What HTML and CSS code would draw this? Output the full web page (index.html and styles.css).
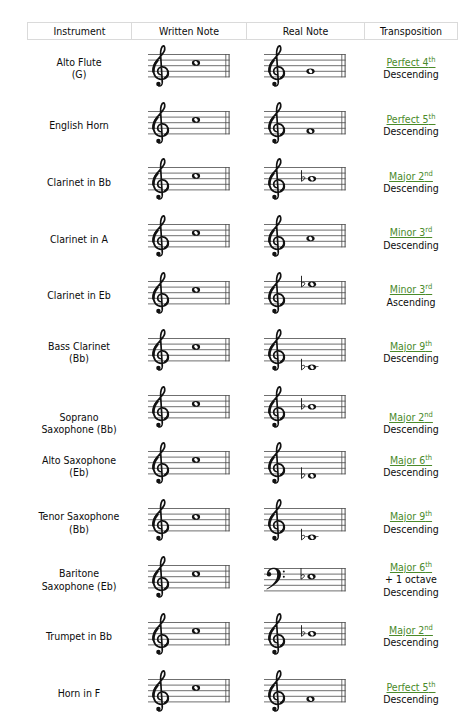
FILE: index.html
```html
<!DOCTYPE html>
<html>
<head>
<meta charset="utf-8">
<link rel="stylesheet" href="styles.css">
</head>
<body>
<svg class="sprite" width="0" height="0" aria-hidden="true">
  <defs>
    <g id="lines" fill="none" stroke="#4a4a4a" stroke-width="0.8">
      <path d="M0 9.5H81.6M0 15.1H81.6M0 20.7H81.6M0 26.3H81.6M0 31.9H81.6M77.8 9.1V32.3"/>
      <path stroke-width="1" d="M81.1 9.1V32.3"/>
    </g>
    <g id="tc">
      <g fill="none" stroke="#111" stroke-linecap="round" stroke-linejoin="round">
        <path stroke-width="1.7" d="M14.3 37L12.6 9.5C12.4 5.5 13.6 1.2 15.3 0.9C16.8 0.7 17.2 3.8 16.2 6.2C14.6 10 8.5 14.5 6.3 19.5C4.2 24.5 5.3 31 10 33.5C14 35.5 19.5 33.5 20.1 29C20.6 25 17.8 21.8 14.5 21.8C11.3 21.8 9.5 24 9.7 26.6C9.9 28.8 11.8 30 13.7 29.7"/>
        <path stroke-width="2.6" d="M9.5 15.5C7 18.5 5.2 22 5.4 26.5"/>
        <path stroke-width="2.2" d="M19.9 26.5C20.4 29 19.6 31.5 17 33"/>
        <path stroke-width="1.4" d="M14.3 37C14.6 40 12.8 41.3 10.8 41"/>
      </g>
      <circle cx="10.4" cy="39" r="2.2" fill="#111"/>
    </g>
    <g id="bc" fill="#111">
      <path d="M3 14.5C3.5 10 7.5 8.6 10.5 8.8C15 9.1 17 12.2 17 15.5C17 21.5 11 26.5 2.8 30.6L2.4 30C8.8 26 13.2 21.5 13.2 15.5C13.2 12 12 9.9 9.9 9.9C7.6 9.9 5.6 11 5.1 13Z"/>
      <circle cx="5" cy="15.2" r="2.2"/>
      <circle cx="19.8" cy="12.4" r="1"/>
      <circle cx="19.8" cy="17.8" r="1"/>
    </g>
    <g id="wn">
      <ellipse rx="4.1" ry="2.8" fill="#111"/>
      <ellipse rx="1.5" ry="2.1" transform="rotate(-40)" fill="#fff"/>
    </g>
    <g id="fl">
      <path d="M0 -8.5V2.6C1.6 1.6 3.6 0.4 3.3 -1.1C3 -2.4 1.2 -2.2 0 -0.9" fill="none" stroke="#111" stroke-width="0.9"/>
    </g>
    <g id="ledger">
      <path d="M-6.5 0H6.5" stroke="#4a4a4a" stroke-width="0.8"/>
    </g>
  </defs>
</svg>

<div class="chart">
  <div class="head">
    <div>Instrument</div>
    <div>Written Note</div>
    <div>Real Note</div>
    <div>Transposition</div>
  </div>

  <div class="row">
    <div class="name">Alto Flute<br>(G)</div>
    <div class="staff"><svg width="82" height="42" viewBox="0 0 82 42"><use href="#lines"/><use href="#tc"/><use href="#wn" x="48" y="17.9"/></svg></div>
    <div class="staff"><svg width="82" height="42" viewBox="0 0 82 42"><use href="#lines"/><use href="#tc"/><use href="#wn" x="46.5" y="26.3"/></svg></div>
    <div class="tr"><a>Perfect 4<sup>th</sup></a><br>Descending</div>
  </div>

  <div class="row">
    <div class="name">English Horn</div>
    <div class="staff"><svg width="82" height="42" viewBox="0 0 82 42"><use href="#lines"/><use href="#tc"/><use href="#wn" x="48" y="17.9"/></svg></div>
    <div class="staff"><svg width="82" height="42" viewBox="0 0 82 42"><use href="#lines"/><use href="#tc"/><use href="#wn" x="46.5" y="29.1"/></svg></div>
    <div class="tr"><a>Perfect 5<sup>th</sup></a><br>Descending</div>
  </div>

  <div class="row">
    <div class="name">Clarinet in Bb</div>
    <div class="staff"><svg width="82" height="42" viewBox="0 0 82 42"><use href="#lines"/><use href="#tc"/><use href="#wn" x="48" y="17.9"/></svg></div>
    <div class="staff"><svg width="82" height="42" viewBox="0 0 82 42"><use href="#lines"/><use href="#tc"/><use href="#fl" x="37.5" y="20.7"/><use href="#wn" x="48" y="20.7"/></svg></div>
    <div class="tr"><a>Major 2<sup>nd</sup></a><br>Descending</div>
  </div>

  <div class="row">
    <div class="name">Clarinet in A</div>
    <div class="staff"><svg width="82" height="42" viewBox="0 0 82 42"><use href="#lines"/><use href="#tc"/><use href="#wn" x="48" y="17.9"/></svg></div>
    <div class="staff"><svg width="82" height="42" viewBox="0 0 82 42"><use href="#lines"/><use href="#tc"/><use href="#wn" x="46.5" y="23.5"/></svg></div>
    <div class="tr"><a>Minor 3<sup>rd</sup></a><br>Descending</div>
  </div>

  <div class="row">
    <div class="name">Clarinet in Eb</div>
    <div class="staff"><svg width="82" height="42" viewBox="0 0 82 42"><use href="#lines"/><use href="#tc"/><use href="#wn" x="48" y="17.9"/></svg></div>
    <div class="staff"><svg width="82" height="42" viewBox="0 0 82 42"><use href="#lines"/><use href="#tc"/><use href="#fl" x="37.5" y="12.3"/><use href="#wn" x="48" y="12.3"/></svg></div>
    <div class="tr"><a>Minor 3<sup>rd</sup></a><br>Ascending</div>
  </div>

  <div class="row">
    <div class="name">Bass Clarinet<br>(Bb)</div>
    <div class="staff"><svg width="82" height="42" viewBox="0 0 82 42"><use href="#lines"/><use href="#tc"/><use href="#wn" x="48" y="17.9"/></svg></div>
    <div class="staff"><svg width="82" height="42" viewBox="0 0 82 42"><use href="#lines"/><use href="#tc"/><use href="#ledger" x="48" y="37.5"/><use href="#fl" x="37.5" y="38.3"/><use href="#wn" x="48" y="38.3"/></svg></div>
    <div class="tr"><a>Major 9<sup>th</sup></a><br>Descending</div>
  </div>

  <div class="row">
    <div class="name low">Soprano<br>Saxophone (Bb)</div>
    <div class="staff"><svg width="82" height="42" viewBox="0 0 82 42"><use href="#lines"/><use href="#tc"/><use href="#wn" x="48" y="17.9"/></svg></div>
    <div class="staff"><svg width="82" height="42" viewBox="0 0 82 42"><use href="#lines"/><use href="#tc"/><use href="#fl" x="37.5" y="20.7"/><use href="#wn" x="48" y="20.7"/></svg></div>
    <div class="tr low"><a>Major 2<sup>nd</sup></a><br>Descending</div>
  </div>

  <div class="row">
    <div class="name">Alto Saxophone<br>(Eb)</div>
    <div class="staff"><svg width="82" height="42" viewBox="0 0 82 42"><use href="#lines"/><use href="#tc"/><use href="#wn" x="48" y="17.9"/></svg></div>
    <div class="staff"><svg width="82" height="42" viewBox="0 0 82 42"><use href="#lines"/><use href="#tc"/><use href="#fl" x="37.5" y="33.8"/><use href="#wn" x="48" y="33.8"/></svg></div>
    <div class="tr"><a>Major 6<sup>th</sup></a><br>Descending</div>
  </div>

  <div class="row">
    <div class="name">Tenor Saxophone<br>(Bb)</div>
    <div class="staff"><svg width="82" height="42" viewBox="0 0 82 42"><use href="#lines"/><use href="#tc"/><use href="#wn" x="48" y="17.9"/></svg></div>
    <div class="staff"><svg width="82" height="42" viewBox="0 0 82 42"><use href="#lines"/><use href="#tc"/><use href="#ledger" x="48" y="37.5"/><use href="#fl" x="37.5" y="38.3"/><use href="#wn" x="48" y="38.3"/></svg></div>
    <div class="tr"><a>Major 9<sup>th</sup></a><br>Descending</div>
  </div>

  <div class="row">
    <div class="name">Baritone<br>Saxophone (Eb)</div>
    <div class="staff"><svg width="82" height="42" viewBox="0 0 82 42"><use href="#lines"/><use href="#tc"/><use href="#wn" x="48" y="17.9"/></svg></div>
    <div class="staff shift"><svg width="82" height="42" viewBox="0 0 82 42"><use href="#lines"/><use href="#bc"/><use href="#fl" x="37" y="17.6"/><use href="#wn" x="47.5" y="17.6"/></svg></div>
    <div class="tr"><a>Major 6<sup>th</sup></a><br>+ 1 octave<br>Descending</div>
  </div>

  <div class="row">
    <div class="name">Trumpet in Bb</div>
    <div class="staff"><svg width="82" height="42" viewBox="0 0 82 42"><use href="#lines"/><use href="#tc"/><use href="#wn" x="48" y="17.9"/></svg></div>
    <div class="staff"><svg width="82" height="42" viewBox="0 0 82 42"><use href="#lines"/><use href="#tc"/><use href="#fl" x="37.5" y="20.7"/><use href="#wn" x="48" y="20.7"/></svg></div>
    <div class="tr"><a>Major 2<sup>nd</sup></a><br>Descending</div>
  </div>

  <div class="row">
    <div class="name">Horn in F</div>
    <div class="staff"><svg width="82" height="42" viewBox="0 0 82 42"><use href="#lines"/><use href="#tc"/><use href="#wn" x="48" y="17.9"/></svg></div>
    <div class="staff"><svg width="82" height="42" viewBox="0 0 82 42"><use href="#lines"/><use href="#tc"/><use href="#wn" x="46.5" y="29.1"/></svg></div>
    <div class="tr"><a>Perfect 5<sup>th</sup></a><br>Descending</div>
  </div>
</div>
</body>
</html>
```

FILE: styles.css
```css
html, body {
  margin: 0;
  padding: 0;
  background: #ffffff;
}

body {
  font-family: "DejaVu Sans Condensed", "DejaVu Sans", sans-serif;
  font-stretch: condensed;
  font-size: 10.5px;
  line-height: 12.4px;
  color: #0c0c0c;
}

.sprite {
  display: block;
  width: 0;
  height: 0;
  overflow: hidden;
}

.chart {
  width: 431px;
  margin: 22px 0 0 27px;
}

.head {
  display: grid;
  grid-template-columns: 103px 115px 118px 93px;
  height: 18px;
  box-sizing: border-box;
  border: 1px solid #dadada;
}

.head div {
  display: flex;
  align-items: center;
  justify-content: center;
  border-left: 1px solid #dadada;
}

.head div:first-child {
  border-left: 0;
}

.row {
  display: grid;
  grid-template-columns: 104px 115px 118px 94px;
  height: 56.8px;
  align-items: center;
  text-align: center;
}

.staff {
  align-self: start;
  padding-top: 4.8px;
  display: flex;
  justify-content: center;
}

.staff svg {
  display: block;
  overflow: visible;
}

.staff.shift {
  padding-top: 7.6px;
}

.low {
  padding-top: 28px;
}

.tr a {
  color: #4a8a2a;
  text-decoration: underline;
  text-decoration-thickness: 1px;
  text-underline-offset: 1px;
}

.tr sup {
  font-size: 7.5px;
  line-height: 0;
  vertical-align: 4px;
}
```
